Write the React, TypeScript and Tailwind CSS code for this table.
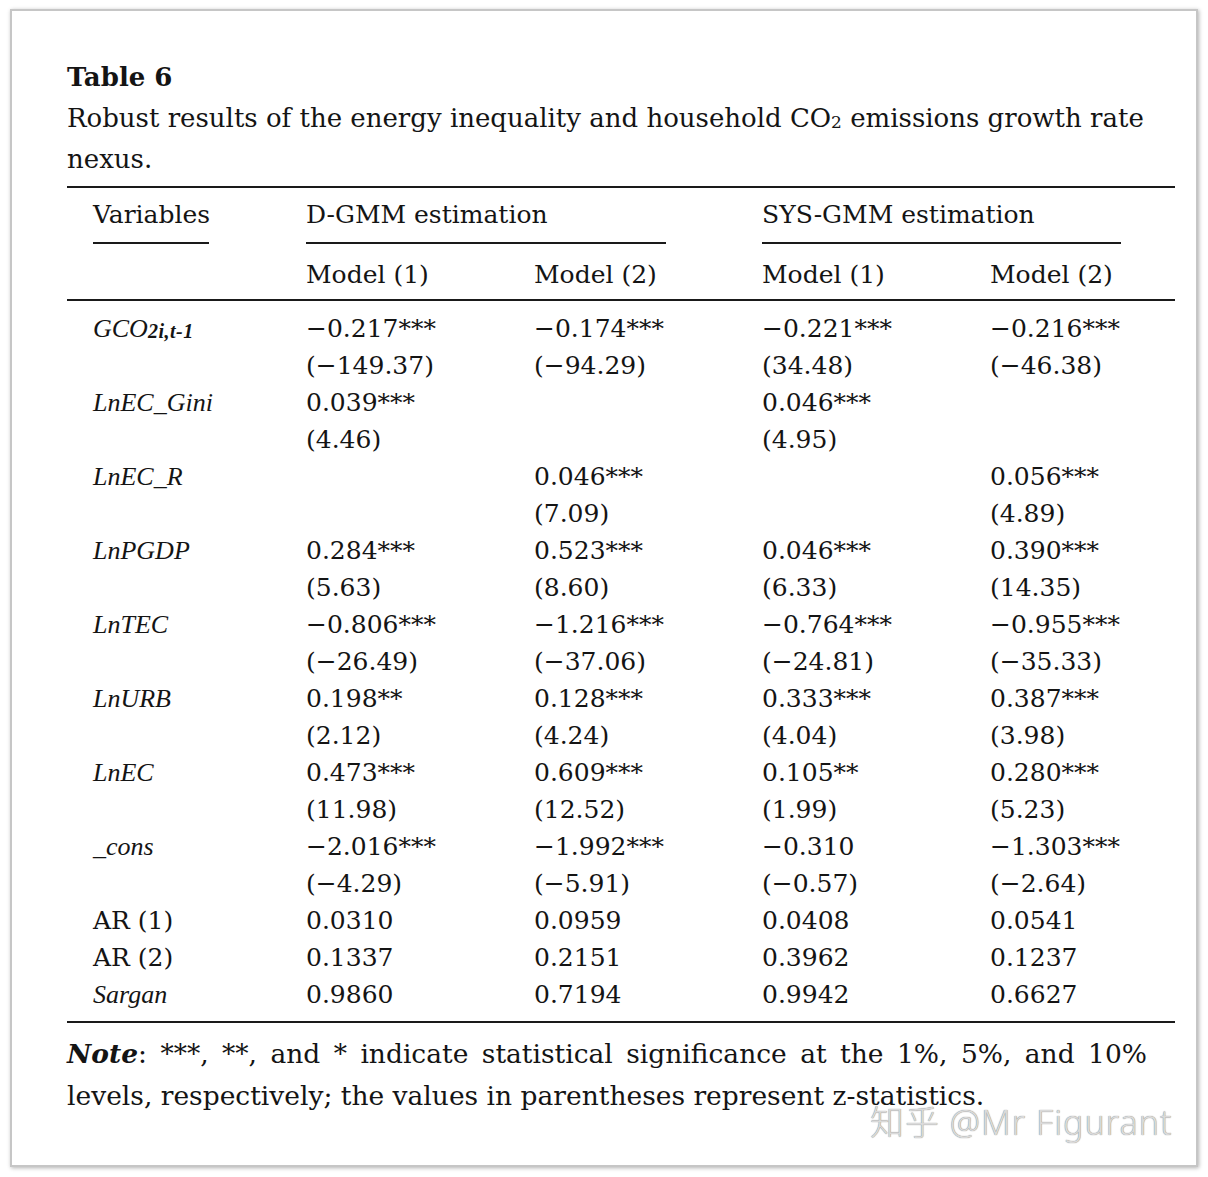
import React from "react";

type Row = { v: React.ReactNode; vals: string[] };

const serif = "font-['DejaVu_Serif',serif]";
const ital = "italic font-['Liberation_Serif',serif] text-[26px]";

const rows: Row[] = [
  {
    v: (
      <span className={ital}>
        GCO
        <sub className="text-[20px] font-semibold relative top-[1px] tracking-[0.5px]">2i,t-1</sub>
      </span>
    ),
    vals: ["−0.217***", "−0.174***", "−0.221***", "−0.216***"],
  },
  { v: "", vals: ["(−149.37)", "(−94.29)", "(34.48)", "(−46.38)"] },
  { v: <span className={ital}>LnEC_Gini</span>, vals: ["0.039***", "", "0.046***", ""] },
  { v: "", vals: ["(4.46)", "", "(4.95)", ""] },
  { v: <span className={ital}>LnEC_R</span>, vals: ["", "0.046***", "", "0.056***"] },
  { v: "", vals: ["", "(7.09)", "", "(4.89)"] },
  { v: <span className={ital}>LnPGDP</span>, vals: ["0.284***", "0.523***", "0.046***", "0.390***"] },
  { v: "", vals: ["(5.63)", "(8.60)", "(6.33)", "(14.35)"] },
  { v: <span className={ital}>LnTEC</span>, vals: ["−0.806***", "−1.216***", "−0.764***", "−0.955***"] },
  { v: "", vals: ["(−26.49)", "(−37.06)", "(−24.81)", "(−35.33)"] },
  { v: <span className={ital}>LnURB</span>, vals: ["0.198**", "0.128***", "0.333***", "0.387***"] },
  { v: "", vals: ["(2.12)", "(4.24)", "(4.04)", "(3.98)"] },
  { v: <span className={ital}>LnEC</span>, vals: ["0.473***", "0.609***", "0.105**", "0.280***"] },
  { v: "", vals: ["(11.98)", "(12.52)", "(1.99)", "(5.23)"] },
  { v: <span className={ital}>_cons</span>, vals: ["−2.016***", "−1.992***", "−0.310", "−1.303***"] },
  { v: "", vals: ["(−4.29)", "(−5.91)", "(−0.57)", "(−2.64)"] },
  { v: "AR (1)", vals: ["0.0310", "0.0959", "0.0408", "0.0541"] },
  { v: "AR (2)", vals: ["0.1337", "0.2151", "0.3962", "0.1237"] },
  { v: <span className={ital}>Sargan</span>, vals: ["0.9860", "0.7194", "0.9942", "0.6627"] },
];

const cols = "grid grid-cols-[26px_213px_228px_228px_228px_185px]";

export default function App() {
  return (
    <div className="w-[1208px] h-[1177px] bg-white pt-[9px] pl-[10px]">
      <div
        className={`relative w-[1188px] h-[1158px] bg-white border-2 border-[#c6c6c6] shadow-[1px_1px_4px_rgba(0,0,0,0.3)] pl-[55px] pt-[46px] text-[#141414] ${serif}`}
      >
        {/* caption */}
        <div className="w-[1080px] text-[26px] leading-[41px]">
          <div className="font-bold">Table 6</div>
          <div className="whitespace-nowrap">
            Robust results of the energy inequality and household CO
            <sub className="text-[17px] relative top-[1px]">2</sub> emissions growth rate
          </div>
          <div>nexus.</div>
        </div>

        {/* table */}
        <div className="w-[1108px] mt-[6px] border-t-2 border-[#1a1a1a] text-[25px] leading-[37px]">
          <div className={`${cols} pt-[8px]`}>
            <div />
            <div>
              <div className="w-[116px] pb-[9px] border-b-2 border-[#1a1a1a]">Variables</div>
            </div>
            <div className="col-span-2">
              <div className="w-[360px] pb-[9px] border-b-2 border-[#1a1a1a]">D-GMM estimation</div>
            </div>
            <div className="col-span-2">
              <div className="w-[359px] pb-[9px] border-b-2 border-[#1a1a1a]">SYS-GMM estimation</div>
            </div>
          </div>
          <div className={`${cols} pt-[12px] pb-[6px] border-b-2 border-[#1a1a1a]`}>
            <div />
            <div />
            <div>Model (1)</div>
            <div>Model (2)</div>
            <div>Model (1)</div>
            <div>Model (2)</div>
          </div>
          <div className="pt-[9px] pb-[8px] border-b-2 border-[#1a1a1a]">
            {rows.map((r, i) => (
              <div key={i} className={`${cols} h-[37px] whitespace-nowrap`}>
                <div />
                <div>{r.v}</div>
                {r.vals.map((x, j) => (
                  <div key={j}>{x}</div>
                ))}
              </div>
            ))}
          </div>
        </div>

        {/* note */}
        <p className="w-[1080px] mt-[10px] text-[26.5px] leading-[42px] text-justify">
          <span className="font-bold italic">Note</span>: ***, **, and * indicate statistical significance at the 1%, 5%, and 10% levels,
          respectively; the values in parentheses represent z-statistics.
        </p>

        {/* watermark */}
        <div className="absolute left-[858px] top-[1094px] text-[34px] leading-none tracking-[1px] whitespace-nowrap text-[#dadada] font-['Noto_Sans','Noto_Sans_CJK_SC',sans-serif] font-light [text-shadow:0_0_1px_rgba(0,0,0,0.6)]">
          知乎 @Mr Figurant
        </div>
      </div>
    </div>
  );
}
